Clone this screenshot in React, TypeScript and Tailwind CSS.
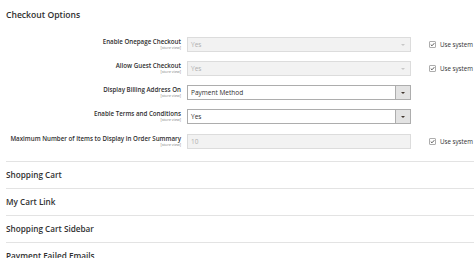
import React from 'react'

type Campo = {
  rotulo: string
  valor: string
  tipo: 'select' | 'input'
  desativado: boolean
  sistema: boolean
  altura: string
}

const campos: Campo[] = [
  { rotulo: 'Enable Onepage Checkout', valor: 'Yes', tipo: 'select', desativado: true, sistema: true, altura: 'h-[24px]' },
  { rotulo: 'Allow Guest Checkout', valor: 'Yes', tipo: 'select', desativado: true, sistema: true, altura: 'h-[24px]' },
  { rotulo: 'Display Billing Address On', valor: 'Payment Method', tipo: 'select', desativado: false, sistema: false, altura: 'h-[24px]' },
  { rotulo: 'Enable Terms and Conditions', valor: 'Yes', tipo: 'select', desativado: false, sistema: false, altura: 'h-[25px]' },
  { rotulo: 'Maximum Number of Items to Display in Order Summary', valor: '10', tipo: 'input', desativado: true, sistema: true, altura: 'h-[27px]' },
]

const secoes = ['Shopping Cart', 'My Cart Link', 'Shopping Cart Sidebar', 'Payment Failed Emails']

function Seta({ desativado }: { desativado: boolean }) {
  return (
    <div
      className={
        desativado
          ? 'flex w-[15px] items-center justify-center'
          : 'flex w-[15px] items-center justify-center border-l border-[#adadad] bg-[#e3e3e3]'
      }
    >
      <div
        className={
          desativado
            ? 'h-0 w-0 border-x-[2px] border-t-[2px] border-x-transparent border-t-[#c8c8c8]'
            : 'h-0 w-0 border-x-[2px] border-t-[2px] border-x-transparent border-t-[#41362f]'
        }
      />
    </div>
  )
}

function Linha({ campo }: { campo: Campo }) {
  const caixa = campo.desativado
    ? 'flex h-[15px] w-[224px] border border-[#dcdcdc] bg-[#f2f2f2]'
    : 'flex h-[15px] w-[224px] border border-[#adadad] bg-white'
  return (
    <div className={`flex items-start ${campo.altura}`}>
      <div className="flex w-[175px] flex-col items-end pt-[1px]">
        <span className="whitespace-nowrap text-[6.2px] font-semibold leading-[7px] text-[#303030]">{campo.rotulo}</span>
        <span className="text-[3.8px] leading-[5px] text-[#808080]">[store view]</span>
      </div>
      <div className={`ml-[6px] ${caixa}`}>
        <span
          className={
            campo.desativado
              ? 'flex-1 pl-[3px] text-[6.5px] leading-[13px] text-[#b0b0b0]'
              : 'flex-1 pl-[3px] text-[6.5px] leading-[13px] text-[#303030]'
          }
        >
          {campo.valor}
        </span>
        {campo.tipo === 'select' && <Seta desativado={campo.desativado} />}
      </div>
      {campo.sistema && (
        <div className="ml-[18px] flex h-[15px] items-center gap-[4px]">
          <div className="flex h-[7px] w-[7px] shrink-0 items-center justify-center rounded-[1px] border border-[#adadad] bg-white">
            <svg width="5" height="5" viewBox="0 0 10 10">
              <path d="M1.5 5.2 L4 7.6 L8.6 2.4" fill="none" stroke="#303030" strokeWidth="1.6" />
            </svg>
          </div>
          <span className="whitespace-nowrap text-[6.2px] leading-[8px] text-[#303030]">Use system</span>
        </div>
      )}
    </div>
  )
}

export default function App() {
  return (
    <div className="h-[258px] w-[474px] overflow-hidden bg-white font-['Open_Sans',sans-serif] text-[#303030]">
      <div className="pl-[6px]">
        <h2 className="h-[37px] pt-[9px] text-[8.6px] font-semibold leading-[12px] text-[#303030]">Checkout Options</h2>
        <div className="flex h-[124px] flex-col">
          {campos.map((c) => (
            <Linha key={c.rotulo} campo={c} />
          ))}
        </div>
        {secoes.map((s) => (
          <div key={s} className="flex h-[27px] items-center border-t border-[#e3e3e3] text-[8.2px] font-semibold">
            {s}
          </div>
        ))}
      </div>
    </div>
  )
}
